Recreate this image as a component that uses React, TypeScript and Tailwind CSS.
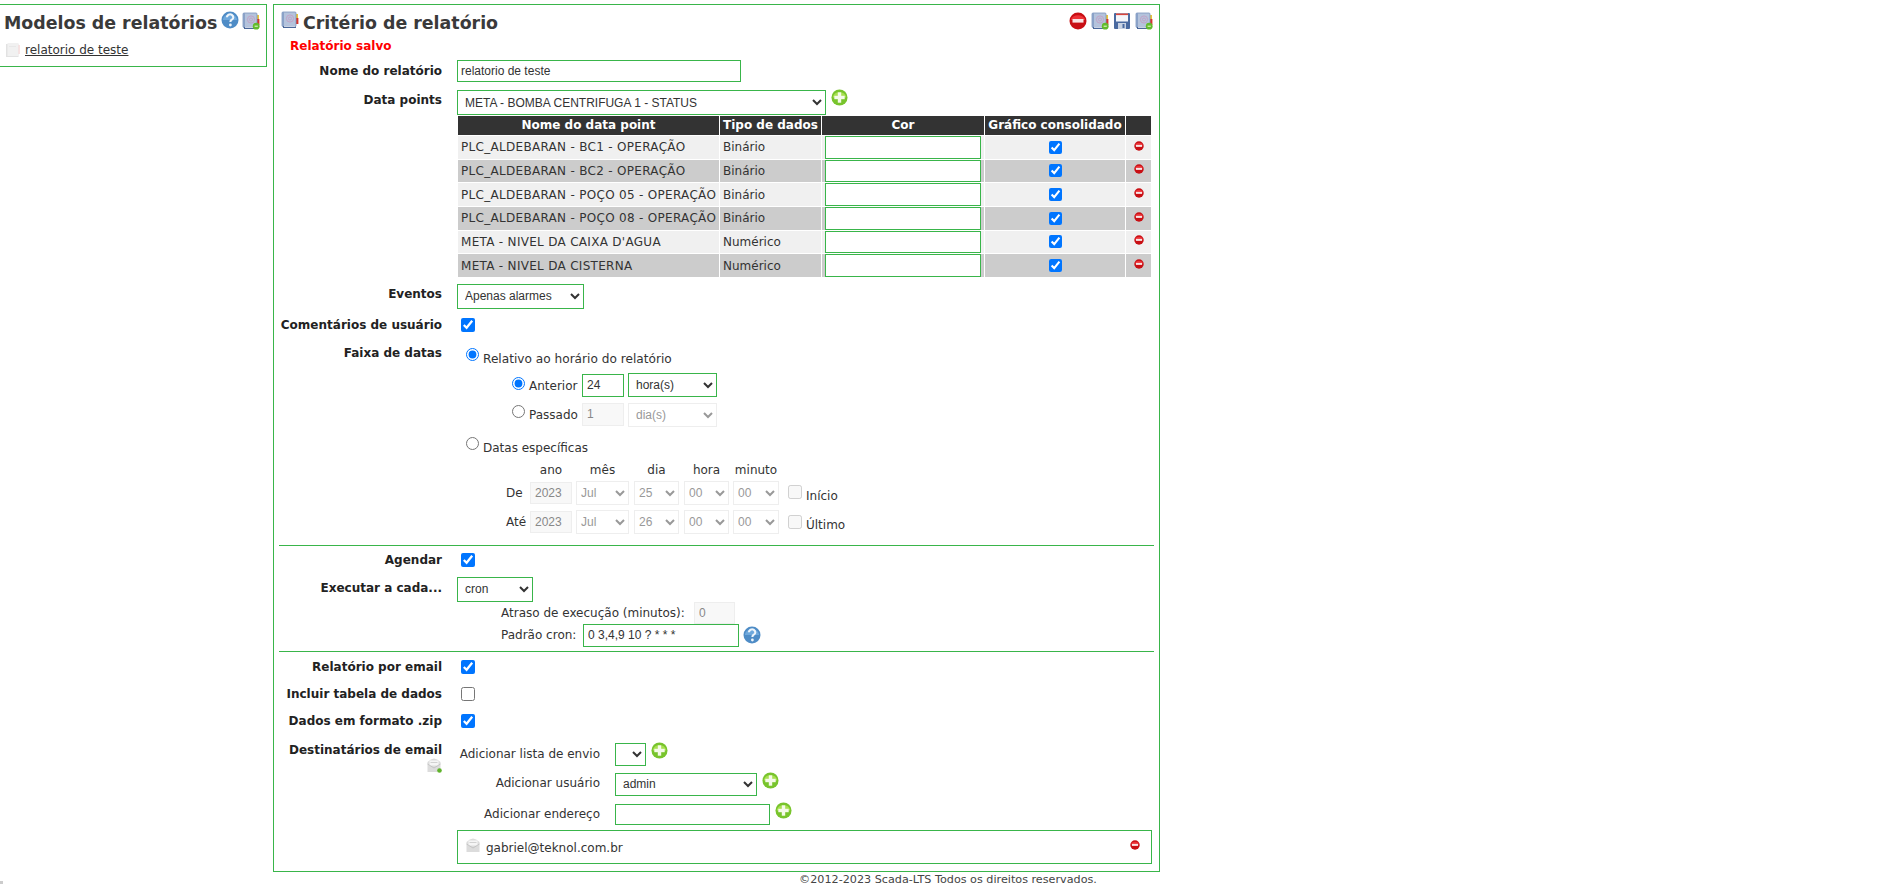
import React from 'react';

const field = "border border-[#39b54a] bg-white text-[12px] text-[#333] font-['Liberation_Sans',Arial,sans-serif] outline-none";
const off = "border border-[#eeeeee] bg-[#f8f8f8] text-[12px] text-[#888] font-['Liberation_Sans',Arial,sans-serif] outline-none";
const offSelect = "border border-[#eeeeee] bg-white text-[12px] text-[#999] font-['Liberation_Sans',Arial,sans-serif] outline-none";

const points = [
  ['PLC_ALDEBARAN - BC1 - OPERAÇÃO', 'Binário'],
  ['PLC_ALDEBARAN - BC2 - OPERAÇÃO', 'Binário'],
  ['PLC_ALDEBARAN - POÇO 05 - OPERAÇÃO', 'Binário'],
  ['PLC_ALDEBARAN - POÇO 08 - OPERAÇÃO', 'Binário'],
  ['META - NIVEL DA CAIXA D\'AGUA', 'Numérico'],
  ['META - NIVEL DA CISTERNA', 'Numérico'],
];

function BookIcon({ add = false, className = '' }: { add?: boolean; className?: string }) {
  return (
    <svg viewBox="0 0 18 18" className={className}>
      <rect x="15" y="3" width="2" height="5" fill="#e8c33a" />
      <rect x="15" y="7" width="2.4" height="6" fill="#d8342c" />
      <rect x="1" y="1" width="14" height="14.5" rx="1" fill="#b4c3dc" stroke="#7b94bd" strokeWidth="0.8" />
      <rect x="1" y="1" width="2" height="14.5" fill="#8aa2c8" />
      <rect x="2" y="15" width="13" height="2" fill="#4a6799" />
      <rect x="3" y="15.2" width="11.5" height="0.8" fill="#e8edf5" />
      <circle cx="9" cy="7.5" r="3.6" fill="none" stroke="#c59ac0" strokeWidth="0.8" />
      <circle cx="9" cy="7.5" r="1.5" fill="none" stroke="#c59ac0" strokeWidth="0.8" />
      {add && <circle cx="14.2" cy="14.2" r="3.4" fill="#63bb2c" />}
      {add && <rect x="12.6" y="13.7" width="3.2" height="1" fill="#e8f7d8" />}
    </svg>
  );
}

function SaveIcon({ className = '' }: { className?: string }) {
  return (
    <svg viewBox="0 0 18 18" className={className}>
      <rect x="1" y="1" width="16" height="16" rx="1" fill="#4a6aa0" />
      <rect x="3" y="1.5" width="12" height="8" fill="#f4f6fa" />
      <rect x="3" y="1.5" width="12" height="1.6" fill="#d8453c" />
      <rect x="5" y="11" width="8" height="6" fill="#c9d3e3" />
      <rect x="9.5" y="12" width="2" height="4" fill="#4a6aa0" />
    </svg>
  );
}

function MinusIcon({ className = '' }: { className?: string }) {
  return (
    <svg viewBox="0 0 18 18" className={className}>
      <circle cx="9" cy="9" r="8.5" fill="#c80f14" />
      <path d="M2 7a7.5 6 0 0 1 14 0v1H2z" fill="#ee3338" />
      <rect x="3.5" y="7" width="11" height="3.6" fill="#f8e4e4" />
    </svg>
  );
}

function PlusIcon({ className = '' }: { className?: string }) {
  return (
    <svg viewBox="0 0 18 18" className={className}>
      <circle cx="9" cy="9" r="8.5" fill="#78c42c" />
      <path d="M2 8a7.3 6.5 0 0 1 14 0v1H2z" fill="#a8e050" />
      <rect x="7.2" y="3.5" width="3.6" height="11" fill="#f4fae8" />
      <rect x="3.5" y="7.2" width="11" height="3.6" fill="#f4fae8" />
    </svg>
  );
}

function HelpIcon({ className = '' }: { className?: string }) {
  return (
    <svg viewBox="0 0 18 18" className={className}>
      <circle cx="9" cy="9" r="8.5" fill="#4e8cc6" />
      <path d="M2 8a7.3 6.5 0 0 1 14 0v1H2z" fill="#6ea8dc" />
      <path d="M5.9 6.2a3.2 2.9 0 1 1 4.9 2.5c-1.1.7-1.4 1.1-1.4 2.2" fill="none" stroke="#eef5fb" strokeWidth="2.1" />
      <circle cx="9.4" cy="14" r="1.4" fill="#eef5fb" />
    </svg>
  );
}

function DocIcon({ className = '' }: { className?: string }) {
  return (
    <svg viewBox="0 0 16 16" className={className}>
      <rect x="1" y="2" width="12.5" height="13" fill="#e2e2e2" />
      <rect x="2.5" y="1" width="11" height="13" fill="#f1f1f1" />
      <rect x="13.5" y="3" width="1.2" height="9" fill="#f6d6d6" />
      <rect x="4" y="4" width="7" height="0.8" fill="#e6e6e6" />
    </svg>
  );
}

function MailIcon({ add = false, className = '' }: { add?: boolean; className?: string }) {
  return (
    <svg viewBox="0 0 16 16" className={className}>
      <path d="M1.5 5Q8-2 14.5 5v10h-13z" fill="#dcdcdc" />
      <rect x="3.5" y="3.5" width="9" height="5" fill="#f5f5f5" />
      <path d="M1.5 7l6.5 4 6.5-4" fill="none" stroke="#bdbdbd" strokeWidth="0.8" />
      <rect x="4.5" y="5" width="7" height="0.8" fill="#c9c9c9" />
      {add && <circle cx="13.5" cy="13.5" r="2.3" fill="#5fb32b" />}
    </svg>
  );
}

function Check({ checked = false, disabled = false, className = '' }: { checked?: boolean; disabled?: boolean; className?: string }) {
  return <input type="checkbox" defaultChecked={checked} disabled={disabled} className={`w-[14px] h-[14px] ${className}`} />;
}

function Row({ label, labelClass = '', className = '', children }: { label: string; labelClass?: string; className?: string; children?: React.ReactNode }) {
  return (
    <div className={`flex ${className}`}>
      <div className={`w-[168px] shrink-0 text-right font-bold text-[12px] leading-[18px] text-[#222] whitespace-nowrap ${labelClass}`}>{label}</div>
      <div className="ml-[15px] min-w-0 flex-1">{children}</div>
    </div>
  );
}

function DateRow({ label, year, day, last, top, className = '' }: { label: string; year: string; day: string; last: string; top: string; className?: string }) {
  return (
    <div className={`flex items-start ${className}`}>
      <span className="w-[24px] ml-[49px] mt-[3px] leading-[18px]">{label}</span>
      <input disabled defaultValue={year} className={`w-[42px] h-[22px] mt-px pl-[4px] ${off}`} />
      <select disabled className={`w-[53px] h-[24px] ml-[4px] ${offSelect}`}><option>Jul</option></select>
      <select disabled className={`w-[45px] h-[24px] ml-[5px] ${offSelect}`}><option>{day}</option></select>
      <select disabled className={`w-[45px] h-[24px] ml-[5px] ${offSelect}`}><option>00</option></select>
      <select disabled className={`w-[46px] h-[24px] ml-[4px] ${offSelect}`}><option>00</option></select>
      <Check disabled className={`ml-[9px] ${top === 'a' ? 'mt-[4px]' : 'mt-[5px]'}`} />
      <span className="ml-[4px] mt-[6px] leading-[18px]">{last}</span>
    </div>
  );
}

export default function App() {
  return (
    <div className="relative h-screen overflow-hidden bg-white font-['DejaVu_Sans',Verdana,sans-serif] text-[12px] text-[#333]">
      <div className="flex items-start pt-1">
        <div className="w-[268px] h-[63px] -ml-px border border-[#39b54a] pl-1">
          <div className="flex items-start h-[31px]">
            <h1 className="text-[17.4px] font-bold leading-[36px] text-[#3a3a3a] whitespace-nowrap">Modelos de relatórios</h1>
            <HelpIcon className="w-[18px] h-[18px] ml-[4px] mt-[6px]" />
            <BookIcon add className="w-[18px] h-[18px] ml-[3px] mt-[7px]" />
          </div>
          <div className="flex items-center mt-[5px]">
            <DocIcon className="w-[16px] h-[16px] ml-px" />
            <a className="ml-[4px] underline text-[12px] leading-[18px]">relatorio de teste</a>
          </div>
        </div>

        <div className="w-[887px] ml-[6px] border border-[#39b54a] pb-[7px]">
          <div className="flex items-start h-[31px] pl-[7px] pr-[6px]">
            <BookIcon className="w-[18px] h-[18px] mt-[6px]" />
            <h1 className="ml-[4px] text-[17.4px] font-bold leading-[36px] text-[#3a3a3a]">Critério de relatório</h1>
            <div className="ml-auto flex mt-[7px] gap-[4px]">
              <MinusIcon className="w-[18px] h-[18px]" />
              <BookIcon add className="w-[18px] h-[18px]" />
              <SaveIcon className="w-[18px] h-[18px]" />
              <BookIcon add className="w-[18px] h-[18px]" />
            </div>
          </div>
          <div className="h-[18px] pl-[16px] text-[12px] font-bold leading-[20px] text-[#ff0000]">Relatório salvo</div>

          <Row label="Nome do relatório" labelClass="mt-[1.5px]" className="mt-[6px]">
            <input defaultValue="relatorio de teste" className={`w-[284px] h-[22px] pl-[3px] ${field}`} />
          </Row>

          <Row label="Data points" labelClass="mt-px" className="mt-[8px]">
            <div className="flex items-start">
              <select className={`w-[369px] h-[25px] pl-[3px] ${field}`}><option>META - BOMBA CENTRIFUGA 1 - STATUS</option></select>
              <PlusIcon className="w-[17px] h-[17px] ml-[5px] -mt-px" />
            </div>
            <div className="mt-px ml-px w-[693px] grid grid-cols-[261px_101px_162px_140px_25px] gap-px">
              <div className="h-[19px] bg-[#333333] text-white font-bold text-[12px] leading-[19px] text-center">Nome do data point</div>
              <div className="bg-[#333333] text-white font-bold text-[12px] leading-[19px] text-center whitespace-nowrap">Tipo de dados</div>
              <div className="bg-[#333333] text-white font-bold text-[12px] leading-[19px] text-center">Cor</div>
              <div className="bg-[#333333] text-white font-bold text-[12px] leading-[19px] text-center whitespace-nowrap">Gráfico consolidado</div>
              <div className="bg-[#333333]"></div>
              {points.map(([name, type], i) => {
                const bg = i % 2 === 0 ? 'bg-[#f0f0f0]' : 'bg-[#cccccc]';
                return (
                  <React.Fragment key={name}>
                    <div className={`h-[22.67px] pl-[3px] flex items-center whitespace-nowrap tracking-[0.3px] ${bg}`}>{name}</div>
                    <div className={`pl-[3px] flex items-center ${bg}`}>{type}</div>
                    <div className={`pl-[3px] pr-[3px] ${bg}`}><input className={`block w-full h-full ${field}`} /></div>
                    <div className={`flex items-center justify-center ${bg}`}><input type="checkbox" defaultChecked className="w-[13px] h-[13px]" /></div>
                    <div className={`flex items-center justify-center pb-[3px] ${bg}`}><MinusIcon className="w-[10px] h-[10px]" /></div>
                  </React.Fragment>
                );
              })}
            </div>
          </Row>

          <Row label="Eventos" labelClass="mt-[1.5px]" className="mt-[7px]">
            <select className={`w-[127px] h-[25px] pl-[3px] ${field}`}><option>Apenas alarmes</option></select>
          </Row>

          <Row label="Comentários de usuário" className="mt-[7px]">
            <div className="h-[18px] flex items-center"><Check checked className="ml-[4px]" /></div>
          </Row>

          <Row label="Faixa de datas" className="mt-[10px]">
            <div className="flex items-start h-[24px]">
              <input type="radio" name="range" defaultChecked className="w-[13px] h-[13px] ml-[9px] mt-[4px]" />
              <span className="ml-[4px] mt-[6px] leading-[18px] text-[12.15px]">Relativo ao horário do relatório</span>
            </div>
            <div className="flex items-start h-[24px] mt-[5px]">
              <input type="radio" name="rel" defaultChecked className="w-[13px] h-[13px] ml-[55px] mt-[4px]" />
              <span className="ml-[4px] w-[53px] mt-[4px] leading-[18px]">Anterior</span>
              <input defaultValue="24" className={`w-[42px] h-[23px] mt-px pl-[4px] ${field}`} />
              <select className={`w-[89px] h-[24px] ml-[4px] pl-[3px] ${field}`}><option>hora(s)</option></select>
            </div>
            <div className="flex items-start h-[24px] mt-[6px]">
              <input type="radio" name="rel" className="w-[13px] h-[13px] ml-[55px] mt-[2px]" />
              <span className="ml-[4px] w-[53px] mt-[3px] leading-[18px]">Passado</span>
              <input disabled defaultValue="1" className={`w-[42px] h-[23px] pl-[4px] ${off}`} />
              <select disabled className={`w-[89px] h-[24px] ml-[4px] pl-[3px] ${offSelect}`}><option>dia(s)</option></select>
            </div>
            <div className="flex items-start h-[20px] mt-[10px]">
              <input type="radio" name="range" className="w-[13px] h-[13px] ml-[9px]" />
              <span className="ml-[4px] mt-[2px] leading-[18px]">Datas específicas</span>
            </div>
            <div className="flex h-[16px] mt-[5px] leading-[16px] text-center">
              <span className="w-[42px] ml-[73px]">ano</span>
              <span className="w-[53px] ml-[4px]">mês</span>
              <span className="w-[45px] ml-[5px]">dia</span>
              <span className="w-[45px] ml-[5px]">hora</span>
              <span className="w-[46px] ml-[4px]">minuto</span>
            </div>
            <DateRow label="De" year="2023" day="25" last="Início" top="a" className="mt-[3px] h-[25px]" />
            <DateRow label="Até" year="2023" day="26" last="Último" top="b" className="mt-[4px] h-[24px]" />
          </Row>

          <div className="h-px w-[875px] ml-[5px] mt-[11px] bg-[#39b54a]"></div>

          <Row label="Agendar" className="mt-[5px]">
            <div className="h-[18px] flex items-center"><Check checked className="ml-[4px]" /></div>
          </Row>

          <Row label="Executar a cada..." labelClass="mt-[2px]" className="mt-[8px]">
            <select className={`block w-[76px] h-[25px] pl-[3px] ${field}`}><option>cron</option></select>
            <div className="flex items-center h-[22px] ml-[44px]">
              <span className="w-[188px] whitespace-nowrap">Atraso de execução (minutos):</span>
              <input disabled defaultValue="0" className={`w-[41px] h-[22px] ml-[5px] pl-[4px] ${off}`} />
            </div>
            <div className="flex items-center h-[23px] ml-[44px]">
              <span className="w-[77px]">Padrão cron:</span>
              <input defaultValue="0 3,4,9 10 ? * * *" className={`w-[156px] h-[23px] ml-[5px] pl-[4px] ${field}`} />
              <HelpIcon className="w-[18px] h-[18px] ml-[4px]" />
            </div>
          </Row>

          <div className="h-px w-[875px] ml-[5px] mt-[4px] bg-[#39b54a]"></div>

          <Row label="Relatório por email" className="mt-[6px]">
            <div className="h-[18px] flex items-center"><Check checked className="ml-[4px]" /></div>
          </Row>
          <Row label="Incluir tabela de dados" className="mt-[9px]">
            <div className="h-[18px] flex items-center"><Check className="ml-[4px]" /></div>
          </Row>
          <Row label="Dados em formato .zip" className="mt-[9px]">
            <div className="h-[18px] flex items-center"><Check checked className="ml-[4px]" /></div>
          </Row>

          <div className="flex mt-[10px]">
            <div className="w-[168px] shrink-0 flex flex-col items-end">
              <div className="mt-px font-bold text-[12px] leading-[18px] text-[#222] whitespace-nowrap">Destinatários de email</div>
              <MailIcon add className="w-[16px] h-[16px] -mt-[2px]" />
            </div>
            <div className="ml-[15px] flex-1">
              <div className="flex items-start mt-[3px]">
                <span className="w-[143px] text-right mt-[2px] leading-[18px]">Adicionar lista de envio</span>
                <select className={`w-[31px] h-[23px] ml-[15px] ${field}`}></select>
                <PlusIcon className="w-[17px] h-[17px] ml-[5px] -mt-px" />
              </div>
              <div className="flex items-start mt-[7px]">
                <span className="w-[143px] text-right mt-px leading-[18px]">Adicionar usuário</span>
                <select className={`w-[142px] h-[23px] ml-[15px] pl-[3px] ${field}`}><option>admin</option></select>
                <PlusIcon className="w-[17px] h-[17px] ml-[5px] -mt-px" />
              </div>
              <div className="flex items-start mt-[8px]">
                <span className="w-[143px] text-right mt-px leading-[18px]">Adicionar endereço</span>
                <input className={`w-[155px] h-[21px] ml-[15px] ${field}`} />
                <PlusIcon className="w-[17px] h-[17px] ml-[5px] -mt-[2px]" />
              </div>
              <div className="flex items-center w-[695px] h-[34px] mt-[5px] border border-[#39b54a]">
                <MailIcon className="w-[16px] h-[16px] ml-[7px] -mt-[4px]" />
                <span className="ml-[5px] mt-[2px]">gabriel@teknol.com.br</span>
                <MinusIcon className="w-[10px] h-[10px] ml-auto mr-[11px] -mt-[4px]" />
              </div>
            </div>
          </div>
        </div>
      </div>
      <div className="pl-[799px] text-[11.2px] leading-[16px] text-[#444]">©2012-2023 Scada-LTS Todos os direitos reservados.</div>
      <div className="absolute left-0 bottom-0 w-[3px] h-[3px] bg-[#cccccc]"></div>
    </div>
  );
}
